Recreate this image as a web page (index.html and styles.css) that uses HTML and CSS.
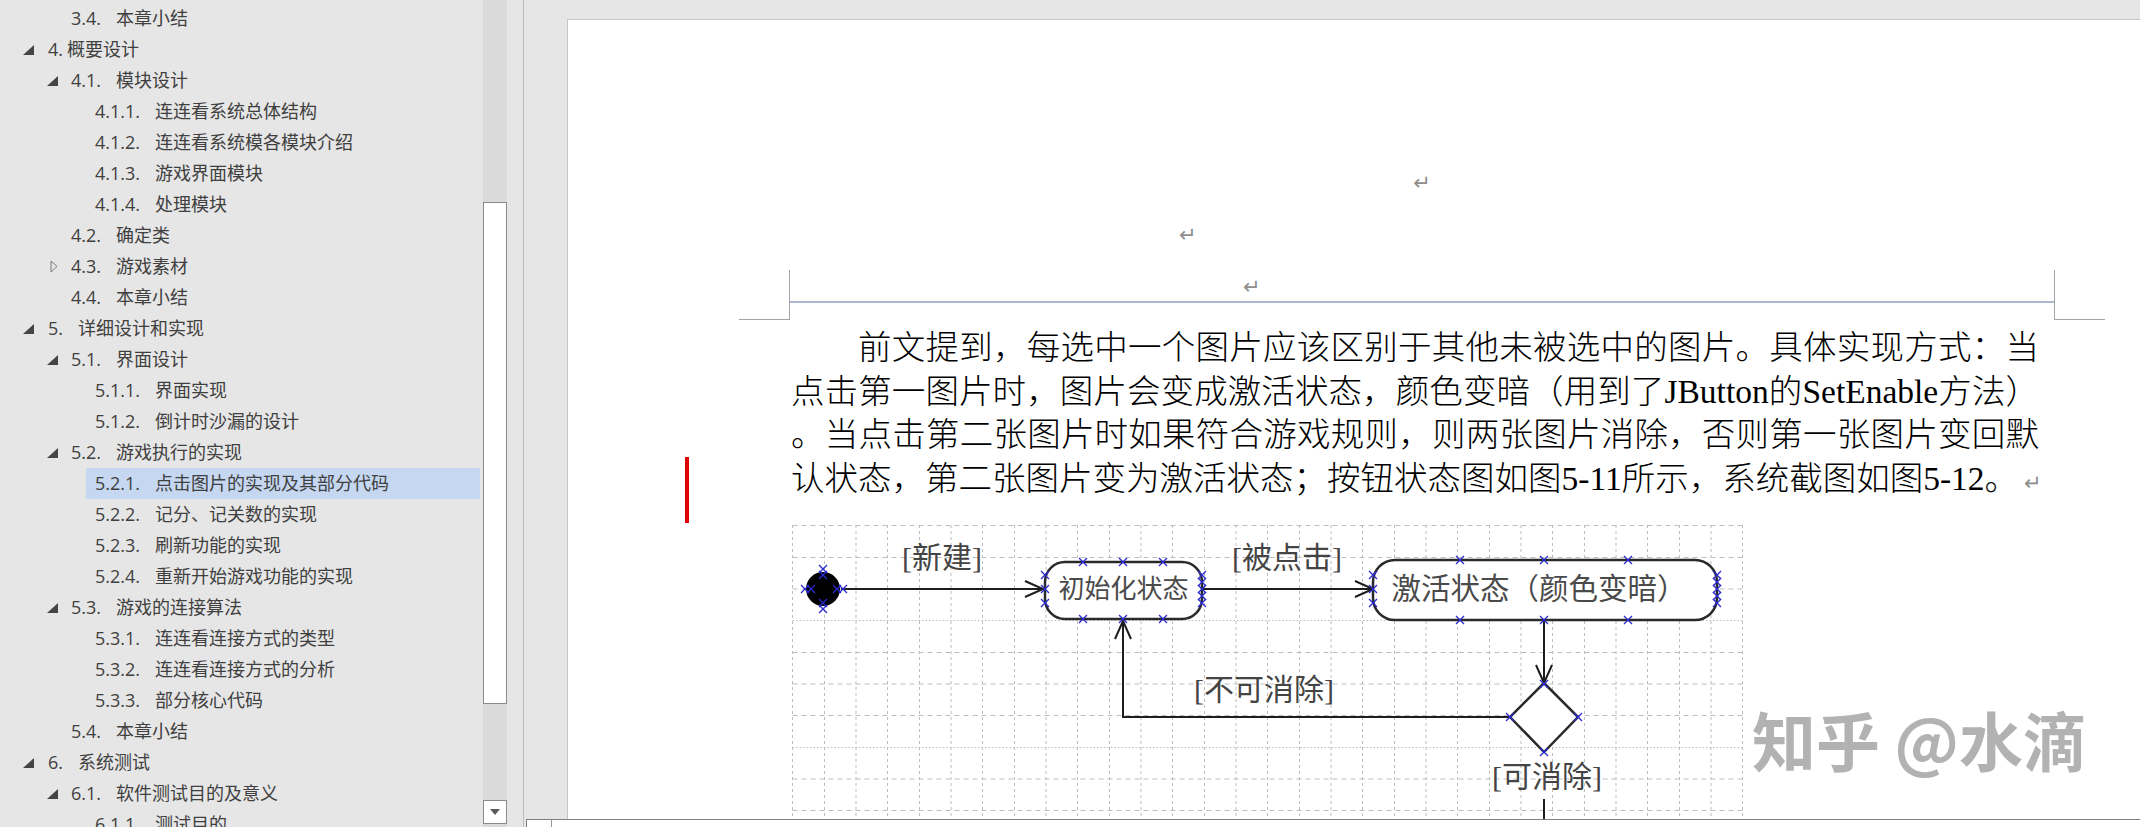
FILE: index.html
```html
<!DOCTYPE html>
<html lang="zh-CN">
<head>
<meta charset="utf-8">
<title>导航窗格 - 文档</title>
<link rel="stylesheet" href="styles.css">
</head>
<body>
<div class="app">
  <aside class="nav">
    <div class="toc">
      <div class="row l2"><span class="tw"></span><span class="item"><span class="num">3.4.</span>本章小结</span></div>
      <div class="row l1"><span class="tw"><svg class="tri" viewBox="0 0 11 10"><path d="M11 0V10H0Z"/></svg></span><span class="item"><span class="num tight">4.</span>概要设计</span></div>
      <div class="row l2"><span class="tw"><svg class="tri" viewBox="0 0 11 10"><path d="M11 0V10H0Z"/></svg></span><span class="item"><span class="num">4.1.</span>模块设计</span></div>
      <div class="row l3"><span class="tw"></span><span class="item"><span class="num">4.1.1.</span>连连看系统总体结构</span></div>
      <div class="row l3"><span class="tw"></span><span class="item"><span class="num">4.1.2.</span>连连看系统模各模块介绍</span></div>
      <div class="row l3"><span class="tw"></span><span class="item"><span class="num">4.1.3.</span>游戏界面模块</span></div>
      <div class="row l3"><span class="tw"></span><span class="item"><span class="num">4.1.4.</span>处理模块</span></div>
      <div class="row l2"><span class="tw"></span><span class="item"><span class="num">4.2.</span>确定类</span></div>
      <div class="row l2"><span class="tw"><svg class="tri-c" viewBox="0 0 8 13"><path d="M1 1L7 6.5L1 12Z"/></svg></span><span class="item"><span class="num">4.3.</span>游戏素材</span></div>
      <div class="row l2"><span class="tw"></span><span class="item"><span class="num">4.4.</span>本章小结</span></div>
      <div class="row l1"><span class="tw"><svg class="tri" viewBox="0 0 11 10"><path d="M11 0V10H0Z"/></svg></span><span class="item"><span class="num">5.</span>详细设计和实现</span></div>
      <div class="row l2"><span class="tw"><svg class="tri" viewBox="0 0 11 10"><path d="M11 0V10H0Z"/></svg></span><span class="item"><span class="num">5.1.</span>界面设计</span></div>
      <div class="row l3"><span class="tw"></span><span class="item"><span class="num">5.1.1.</span>界面实现</span></div>
      <div class="row l3"><span class="tw"></span><span class="item"><span class="num">5.1.2.</span>倒计时沙漏的设计</span></div>
      <div class="row l2"><span class="tw"><svg class="tri" viewBox="0 0 11 10"><path d="M11 0V10H0Z"/></svg></span><span class="item"><span class="num">5.2.</span>游戏执行的实现</span></div>
      <div class="row l3 sel"><span class="tw"></span><span class="item"><span class="num">5.2.1.</span>点击图片的实现及其部分代码</span></div>
      <div class="row l3"><span class="tw"></span><span class="item"><span class="num">5.2.2.</span>记分、记关数的实现</span></div>
      <div class="row l3"><span class="tw"></span><span class="item"><span class="num">5.2.3.</span>刷新功能的实现</span></div>
      <div class="row l3"><span class="tw"></span><span class="item"><span class="num">5.2.4.</span>重新开始游戏功能的实现</span></div>
      <div class="row l2"><span class="tw"><svg class="tri" viewBox="0 0 11 10"><path d="M11 0V10H0Z"/></svg></span><span class="item"><span class="num">5.3.</span>游戏的连接算法</span></div>
      <div class="row l3"><span class="tw"></span><span class="item"><span class="num">5.3.1.</span>连连看连接方式的类型</span></div>
      <div class="row l3"><span class="tw"></span><span class="item"><span class="num">5.3.2.</span>连连看连接方式的分析</span></div>
      <div class="row l3"><span class="tw"></span><span class="item"><span class="num">5.3.3.</span>部分核心代码</span></div>
      <div class="row l2"><span class="tw"></span><span class="item"><span class="num">5.4.</span>本章小结</span></div>
      <div class="row l1"><span class="tw"><svg class="tri" viewBox="0 0 11 10"><path d="M11 0V10H0Z"/></svg></span><span class="item"><span class="num">6.</span>系统测试</span></div>
      <div class="row l2"><span class="tw"><svg class="tri" viewBox="0 0 11 10"><path d="M11 0V10H0Z"/></svg></span><span class="item"><span class="num">6.1.</span>软件测试目的及意义</span></div>
      <div class="row l3"><span class="tw"></span><span class="item"><span class="num">6.1.1.</span>测试目的</span></div>
    </div>
    <div class="vscroll">
      <div class="thumb"></div>
      <div class="down"><svg viewBox="0 0 10 6" class="dn"><path d="M0 0H10L5 6Z"/></svg></div>
    </div>
  </aside>

  <main class="doc">
    <div class="view">
      <div class="page">
        <div class="header">
          <div class="pm c">↵</div>
          <div class="pm i1">↵</div>
          <div class="pm i2">↵</div>
        </div>

        <div class="body">
          <span class="chg"></span>
          <div class="ln first">前文提到，每选中一个图片应该区别于其他未被选中的图片。具体实现方式：当</div>
          <div class="ln">点击第一图片时，图片会变成激活状态，颜色变暗（用到了JButton的SetEnable方法）</div>
          <div class="ln">。当点击第二张图片时如果符合游戏规则，则两张图片消除，否则第一张图片变回默</div>
          <div class="ln last">认状态，第二张图片变为激活状态；按钮状态图如图5-11所示，系统截图如图5-12。<span class="ret">↵</span></div>
        </div>

        <svg class="fig" viewBox="0 0 952 310" xmlns="http://www.w3.org/2000/svg">
          <defs>
            <g id="mk"><path d="M-4 -4L4 4M-4 4L4 -4" stroke="#2a2ad0" stroke-width="1.3" fill="none"/></g>
          </defs>
          <g class="grid">
            <path class="gv" d="M1.5 2V310M33.5 2V310M65 2V310M96.5 2V310M128.5 2V310M160 2V310M191.5 2V310M223.5 2V310M255 2V310M286.5 2V310M318.5 2V310M350 2V310M381.5 2V310M413.5 2V310M445 2V310M476.5 2V310M508.5 2V310M540 2V310M571.5 2V310M603.5 2V310M635 2V310M666.5 2V310M698.5 2V310M730 2V310M761.5 2V310M793.5 2V310M825 2V310M856.5 2V310M888.5 2V310M920 2V310M951.5 2V310"/>
            <path class="gh" d="M1.5 2.5H951.5M1.5 34.5H951.5M1.5 66H951.5M1.5 129.5H951.5M1.5 161H951.5M1.5 192.5H951.5M1.5 256H951.5M1.5 287.5H951.5"/>
            <path class="gd" d="M1.5 97.5H951.5M1.5 224.5H951.5"/>
          </g>

          <g class="lines">
            <path d="M50 66H252"/>
            <path d="M234 58L252 66L234 74"/>
            <path d="M411 66H582"/>
            <path d="M564 58L582 66L564 74"/>
            <path d="M753 97V160"/>
            <path d="M745 142L753 160L761 142"/>
            <path d="M719 194H332V98"/>
            <path d="M324 116L332 98L340 116"/>
            <path d="M753 276V310"/>
          </g>

          <circle cx="32" cy="66" r="17" fill="#000"/>
          <rect class="box" x="254" y="39" width="157" height="57" rx="20"/>
          <rect class="box" x="582" y="37" width="344" height="60" rx="22"/>
          <path class="box" d="M753 160L787 194L753 229L719 194Z"/>

          <text class="lbl" x="111" y="45">[新建]</text>
          <text class="lbl" x="441" y="45">[被点击]</text>
          <text class="lbl" x="403" y="177">[不可消除]</text>
          <text class="lbl" x="701" y="264">[可消除]</text>
          <text class="st1" x="332.5" y="75">初始化状态</text>
          <text class="st2" x="748" y="76">激活状态（颜色变暗）</text>

          <g class="marks">
            <use href="#mk" x="32" y="46"/><use href="#mk" x="32" y="52"/>
            <use href="#mk" x="32" y="80"/><use href="#mk" x="32" y="86"/>
            <use href="#mk" x="14" y="66"/><use href="#mk" x="20" y="66"/>
            <use href="#mk" x="46" y="66"/><use href="#mk" x="52" y="66"/>

            <use href="#mk" x="292" y="39"/><use href="#mk" x="332" y="39"/><use href="#mk" x="372" y="39"/>
            <use href="#mk" x="292" y="96"/><use href="#mk" x="332" y="96"/><use href="#mk" x="372" y="96"/>
            <use href="#mk" x="254" y="52"/><use href="#mk" x="254" y="66"/><use href="#mk" x="254" y="80"/>
            <use href="#mk" x="411" y="52"/><use href="#mk" x="411" y="59"/><use href="#mk" x="411" y="66"/><use href="#mk" x="411" y="73"/><use href="#mk" x="411" y="80"/>

            <use href="#mk" x="669" y="37"/><use href="#mk" x="753" y="37"/><use href="#mk" x="837" y="37"/>
            <use href="#mk" x="669" y="97"/><use href="#mk" x="753" y="97"/><use href="#mk" x="837" y="97"/>
            <use href="#mk" x="582" y="52"/><use href="#mk" x="582" y="66"/><use href="#mk" x="582" y="80"/>
            <use href="#mk" x="926" y="52"/><use href="#mk" x="926" y="59"/><use href="#mk" x="926" y="66"/><use href="#mk" x="926" y="73"/><use href="#mk" x="926" y="80"/>

            <use href="#mk" x="753" y="161"/><use href="#mk" x="719" y="194"/><use href="#mk" x="787" y="194"/><use href="#mk" x="753" y="229"/>
          </g>
        </svg>

        <div class="wm">知乎 @水滴</div>
      </div>
    </div>
    <div class="hscroll"><div class="hbtn"></div></div>
  </main>
</div>
</body>
</html>
```

FILE: styles.css
```css
* { box-sizing: border-box; }

html, body {
  margin: 0;
  padding: 0;
}

body {
  width: 2140px;
  height: 827px;
  overflow: hidden;
  background: #e6e6e6;
  font-family: "Open Sans", "Noto Sans CJK SC", sans-serif;
}

.app {
  display: flex;
  height: 827px;
}

/* ---------- navigation pane ---------- */
.nav {
  flex: 0 0 524px;
  width: 524px;
  display: flex;
  background: #e6e6e6;
  border-right: 1px solid #bcbcbc;
}

.toc {
  flex: 0 0 483px;
  width: 483px;
  padding: 3px 3px 0 0;
  font-size: 18px;
  line-height: 31px;
  color: #404040;
  overflow: hidden;
}

.row {
  display: flex;
  align-items: center;
  height: 31px;
  white-space: nowrap;
}

.l1 { padding-left: 23px; }
.l2 { padding-left: 47px; }
.l3 { padding-left: 71px; }

.tw {
  flex: 0 0 24px;
  width: 24px;
  height: 31px;
  display: flex;
  align-items: center;
}
.l1 .tw { flex-basis: 25px; width: 25px; }

.tri {
  width: 11px;
  height: 10px;
  fill: #454545;
}

.tri-c {
  width: 8px;
  height: 13px;
  margin-left: 3px;
  fill: none;
  stroke: #7a7a7a;
  stroke-width: 1;
}

.item {
  flex: 1;
  display: flex;
  align-items: center;
  height: 31px;
  margin-left: -9px;
  padding-left: 9px;
}

.sel .item { background: #c5d7f1; }

.num { display: inline-block; flex: none; }
.l1 .num { width: 30px; }
.l1 .num.tight { width: 19px; }
.l2 .num { width: 45px; }
.l3 .num { width: 60px; }

.vscroll {
  flex: 0 0 24px;
  width: 24px;
  background: #dadada;
  display: flex;
  flex-direction: column;
}

.thumb {
  margin-top: 202px;
  height: 502px;
  background: #fff;
  border: 1px solid #8a8a8a;
}

.down {
  margin-top: auto;
  margin-bottom: 3px;
  height: 24px;
  background: #fff;
  border: 1px solid #8a8a8a;
  display: flex;
  align-items: center;
  justify-content: center;
}

.dn {
  width: 10px;
  height: 6px;
  fill: #5a5a5a;
}

/* ---------- document area ---------- */
.doc {
  flex: 1;
  min-width: 0;
  display: flex;
  flex-direction: column;
  overflow: hidden;
}

.view {
  flex: 0 0 819px;
  height: 819px;
  padding: 19px 0 0 43px;
  display: flex;
  overflow: hidden;
}

.page {
  flex: 1;
  position: relative;
  overflow: hidden;
  background: #fff;
  border-left: 1px solid #c6c6c6;
  border-top: 1px solid #c6c6c6;
}

.header {
  position: relative;
  margin-left: 221px;
  width: 1266px;
  padding-top: 149px;
  border-bottom: 2px solid #a9b8cf;
}

.header::before,
.header::after {
  content: "";
  position: absolute;
  top: 250px;
  width: 50px;
  height: 49px;
  border-bottom: 1px solid #a5a5a5;
}
.header::before {
  left: -50px;
  border-right: 1px solid #a5a5a5;
}
.header::after {
  left: 1265px;
  border-left: 1px solid #a5a5a5;
}

.pm {
  height: 28px;
  line-height: 28px;
  font-family: "DejaVu Sans", sans-serif;
  font-size: 21px;
  color: #8e8e8e;
}
.pm + .pm { margin-top: 24px; }
.pm.c { text-align: center; }
.pm.i1 { padding-left: 390px; }
.pm.i2 { padding-left: 454px; }

.body {
  position: relative;
  margin: 23px 0 0 223px;
  width: 1248px;
  font-family: "Liberation Serif", "Noto Sans CJK SC", serif;
  font-size: 33.5px;
  font-weight: 300;
  line-height: 43.5px;
  color: #000;
}

.ln {
  height: 43.5px;
  text-align: justify;
  text-align-last: justify;
}
.ln.first { text-indent: 2em; }
.ln.last {
  text-align: left;
  text-align-last: left;
  white-space: nowrap;
}

.ret {
  font-family: "DejaVu Sans", sans-serif;
  font-size: 21px;
  color: #8e8e8e;
  margin-left: 6px;
}

.chg {
  position: absolute;
  left: -106px;
  top: 131px;
  width: 4px;
  height: 66px;
  background: #e00000;
}

.fig {
  display: block;
  margin: 23px 0 0 223px;
  width: 952px;
  height: 310px;
}

.gv, .gh, .gd {
  fill: none;
  stroke: #bdbdbd;
  stroke-width: 1;
}
.gv { stroke-dasharray: 3 3; }
.gh { stroke-dasharray: 5 4; }
.gd { stroke-dasharray: 1.5 2; }

.lines path {
  fill: none;
  stroke: #1e1e1e;
  stroke-width: 2;
}

.box {
  fill: #fff;
  stroke: #2a2a2a;
  stroke-width: 2.5;
}

.lbl {
  font-family: "Liberation Serif", "Noto Sans CJK SC", serif;
  font-size: 30px;
  fill: #444;
}

.st1, .st2 {
  font-family: "Liberation Serif", "Noto Sans CJK SC", serif;
  text-anchor: middle;
  fill: #4a4a4a;
}
.st1 { font-size: 26px; }
.st2 { font-size: 29.5px; }

.wm {
  position: absolute;
  left: 1184px;
  top: 686px;
  font-family: "Noto Sans CJK SC", sans-serif;
  font-size: 64px;
  font-weight: 700;
  line-height: 1;
  color: #b2b2b2;
  white-space: nowrap;
}

.hscroll {
  flex: 0 0 24px;
  height: 24px;
  margin-left: 2px;
  display: flex;
  background: #fff;
  border-top: 1px solid #7f7f7f;
  border-left: 1px solid #7f7f7f;
}

.hbtn {
  width: 25px;
  border-right: 1px solid #9a9a9a;
}
```
